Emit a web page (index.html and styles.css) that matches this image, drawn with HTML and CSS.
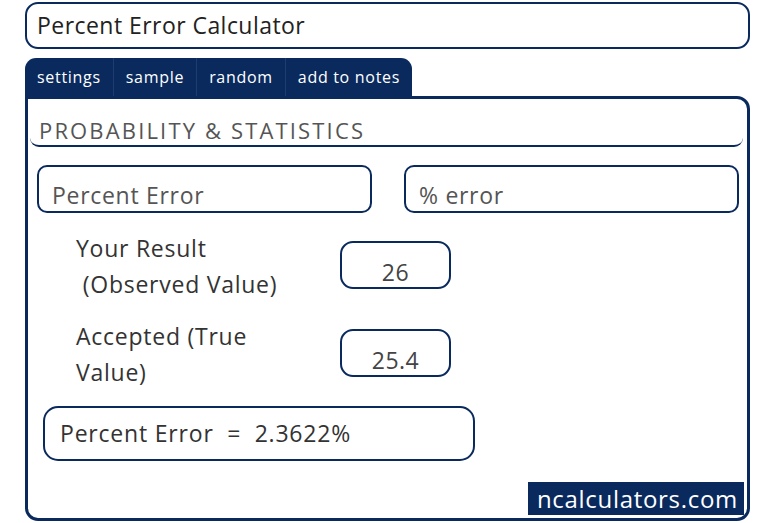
FILE: index.html
```html
<!DOCTYPE html>
<html>
<head>
<meta charset="utf-8">
<link rel="stylesheet" href="styles.css">
</head>
<body>
<div class="app">
  <div class="title">Percent Error Calculator</div>
  <div class="tabs">
    <span class="tab">settings</span>
    <span class="tab">sample</span>
    <span class="tab">random</span>
    <span class="tab">add to notes</span>
  </div>
  <div class="panel">
    <div class="heading">PROBABILITY &amp; STATISTICS</div>
    <div class="selects">
      <div class="select">Percent Error</div>
      <div class="select">% error</div>
    </div>
    <div class="form">
      <div class="label">Your Result<br>&nbsp;(Observed Value)</div>
      <div class="input">26</div>
      <div class="label">Accepted (True<br>Value)</div>
      <div class="input">25.4</div>
    </div>
    <div class="result">Percent Error  =  2.3622%</div>
    <div class="logo">ncalculators.com</div>
  </div>
</div>
</body>
</html>
```
FILE: styles.css
```css
* { box-sizing: border-box; }
body {
  margin: 0;
  background: #fff;
  font-family: "Open Sans", "Noto Sans", sans-serif;
  color: #333;
}
.app {
  width: 750px;
  padding: 2px 0 0 25px;
}
.title {
  height: 47px;
  border: 2px solid #0a2a5e;
  border-radius: 13px;
  padding-left: 10px;
  font-size: 23px;
  letter-spacing: 0.45px;
  line-height: 43px;
  color: #222;
}
.tabs {
  display: inline-flex;
  height: 38px;
  margin-top: 9px;
  background: #0a2a5e;
  border-radius: 11px 11px 0 0;
  white-space: nowrap;
  vertical-align: top;
}
.tab {
  color: #fff;
  font-size: 16px;
  letter-spacing: 0.7px;
  line-height: 38px;
  padding: 0 12px 0 12px;
  border-right: 1px solid #1d3d70;
}
.tab:last-child { border-right: none; }
.panel {
  display: flex;
  flex-direction: column;
  height: 425px;
  border: 3px solid #0a2a5e;
  border-radius: 0 13px 13px 13px;
  padding: 0 3px 3px 2px;
}
.heading {
  height: 48px;
  margin: 0 1px 0 0;
  padding: 18px 0 0 9px;
  border-bottom: 2px solid #0a2a5e;
  border-radius: 0 0 9px 9px;
  font-size: 22px;
  letter-spacing: 2.15px;
  line-height: 26px;
  color: #555;
  white-space: nowrap;
}
.selects {
  display: flex;
  gap: 32px;
  padding: 18px 0 0 7px;
}
.select {
  width: 335px;
  height: 48px;
  border: 2px solid #0a2a5e;
  border-radius: 10px;
  padding: 13px 0 0 13px;
  font-size: 23px;
  letter-spacing: 0.7px;
  line-height: 30px;
  color: #555;
}
.form {
  display: grid;
  grid-template-columns: 264px 111px;
  grid-auto-rows: 48px;
  row-gap: 40px;
  padding: 28px 0 0 46px;
}
.label {
  font-size: 23px;
  letter-spacing: 0.75px;
  line-height: 36px;
  color: #333;
  margin-top: -11px;
  white-space: nowrap;
}
.input {
  border: 2px solid #0a2a5e;
  border-radius: 13px;
  text-align: center;
  padding-top: 14px;
  font-size: 23px;
  letter-spacing: 0.5px;
  line-height: 30px;
  color: #444;
}
.result {
  width: 432px;
  height: 55px;
  margin: 29px 0 0 13px;
  border: 2px solid #0a2a5e;
  border-radius: 15px;
  padding-left: 15px;
  font-size: 23px;
  letter-spacing: 0.8px;
  line-height: 51px;
  color: #333;
  white-space: pre;
}
.logo {
  margin-top: auto;
  align-self: flex-end;
  background: #0a2a5e;
  color: #fff;
  font-size: 24px;
  letter-spacing: 0.7px;
  line-height: 33px;
  padding: 0 6px 0 9px;
}
```
